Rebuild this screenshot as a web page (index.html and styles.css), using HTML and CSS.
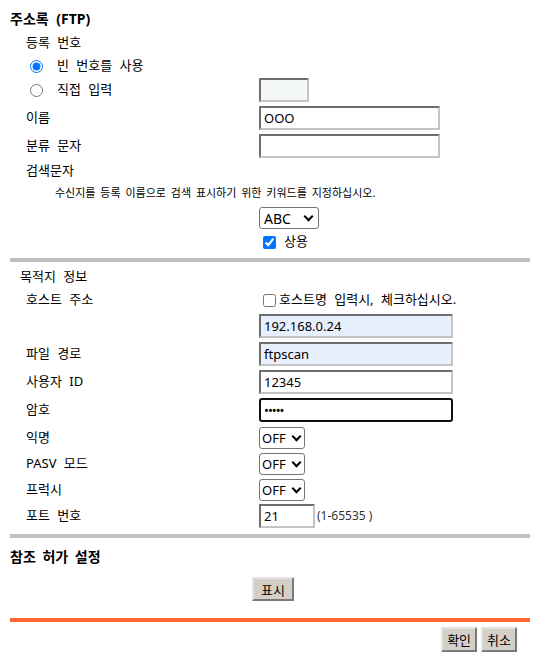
FILE: index.html
```html
<!DOCTYPE html>
<html lang="ko">
<head>
<meta charset="UTF-8" />
<title>주소록 (FTP)</title>
<link rel="stylesheet" href="styles.css">
</head>
<body>

<div class="page">
  <div class="title">주소록 (FTP)</div>
  <div class="row h26"><span class="lbl">등록 번호</span></div>
  <div class="row h20">
    <label class="opt"><input type="radio" name="regno" checked />빈 번호를 사용</label>
  </div>
  <div class="row h28">
    <label class="lbl opt"><input type="radio" name="regno" />직접 입력</label>
    <input type="text" class="field regno" />
  </div>
  <div class="row h28"><span class="lbl">이름</span><input type="text" class="field wide" value="OOO" /></div>
  <div class="row h28"><span class="lbl">분류 문자</span><input type="text" class="field wide" /></div>
  <div class="row h22"><span class="lbl">검색문자</span></div>
  <div class="hint">수신지를 등록 이름으로 검색 표시하기 위한 키워드를 지정하십시오.</div>
  <div class="row h28">
    <span class="lbl"></span>
    <span class="selbox abc"><select class="sel"><option>ABC</option><option>DEF</option></select></span>
  </div>
  <div class="row h20">
    <span class="lbl"></span>
    <label class="chk often"><input type="checkbox" checked />상용</label>
  </div>

  <div class="rule"></div>

  <div class="sub">목적지 정보</div>
  <div class="row h24">
    <span class="lbl">호스트 주소</span>
    <label class="chk"><input type="checkbox" />호스트명 입력시, 체크하십시오.</label>
  </div>
  <div class="row h28"><span class="lbl"></span><input type="text" class="field long filled" value="192.168.0.24" /></div>
  <div class="row h28"><span class="lbl">파일 경로</span><input type="text" class="field long filled" value="ftpscan" /></div>
  <div class="row h28"><span class="lbl">사용자 ID</span><input type="text" class="field long" value="12345" /></div>
  <div class="row h28"><span class="lbl">암호</span><input type="password" class="field long focus" value="12345" /></div>
  <div class="row h27">
    <span class="lbl">익명</span>
    <span class="selbox onoff"><select class="sel"><option>OFF</option><option>ON</option></select></span>
  </div>
  <div class="row h26">
    <span class="lbl">PASV 모드</span>
    <span class="selbox onoff"><select class="sel"><option>OFF</option><option>ON</option></select></span>
  </div>
  <div class="row h26">
    <span class="lbl">프럭시</span>
    <span class="selbox onoff"><select class="sel"><option>OFF</option><option>ON</option></select></span>
  </div>
  <div class="row h26">
    <span class="lbl">포트 번호</span>
    <input type="text" class="field port" value="21" /><span class="range">(1-65535 )</span>
  </div>

  <div class="rule gap5"></div>

  <div class="title ref">참조 허가 설정</div>
  <div class="center"><button type="button" class="btn show">표시</button></div>

  <div class="rule orange"></div>

  <div class="actions">
    <button type="button" class="btn">확인</button>
    <button type="button" class="btn">취소</button>
  </div>
</div>

</body>
</html>
```

FILE: styles.css
```css
body {
  margin: 0;
  font-family: "Noto Sans", "Noto Sans CJK KR", sans-serif;
  font-size: 13px;
  line-height: 1.2;
  word-spacing: 4px;
  color: #000;
  background: #fff;
}
.page {
  width: 520px;
  margin: 0 10px;
}
.title {
  height: 22px;
  margin-top: 8px;
  display: flex;
  align-items: center;
  font-size: 14px;
  font-weight: 700;
}
.title.ref {
  margin-top: 8px;
  word-spacing: 3px;
}
.row {
  display: flex;
  align-items: center;
  padding-left: 16px;
}
.h20 { height: 20px; }
.h22 { height: 22px; }
.h24 { height: 24px; }
.h26 { height: 26px; }
.h27 { height: 27px; }
.h28 { height: 28px; }
.lbl {
  width: 233px;
  flex: none;
}
.opt {
  display: flex;
  align-items: center;
}
.opt input {
  width: 13px;
  height: 13px;
  margin: 0 14px 0 4px;
}
.hint {
  height: 22px;
  display: flex;
  align-items: center;
  padding-left: 45px;
  font-size: 11px;
  word-spacing: 2px;
}
.field {
  box-sizing: border-box;
  height: 24px;
  padding: 1px 3px;
  border: 2px solid;
  border-color: #6e6e6e #c4c4c4 #c4c4c4 #6e6e6e;
  font-family: inherit;
  font-size: 13px;
  color: #000;
  background: #fff;
  outline: none;
}
.regno { width: 50px; background: #f4f8f4; }
.wide { width: 181px; }
.long { width: 194px; }
.port { width: 56px; }
.filled { background: #e8f0fe; }
.focus {
  border-color: #101010;
  border-radius: 3px;
  letter-spacing: -1px;
}
.range {
  margin-left: 2px;
  font-size: 12px;
  word-spacing: 0;
  color: #333;
}
.selbox {
  position: relative;
  display: inline-block;
  height: 22px;
}
.selbox::after {
  content: "";
  position: absolute;
  top: 6px;
  right: 7px;
  width: 5px;
  height: 5px;
  border-right: 2px solid #000;
  border-bottom: 2px solid #000;
  transform: rotate(45deg);
  pointer-events: none;
}
.sel {
  -webkit-appearance: none;
  appearance: none;
  box-sizing: border-box;
  width: 100%;
  height: 22px;
  padding: 0 0 0 3px;
  border: 1px solid #767676;
  border-radius: 3px;
  background: #fff;
  font-family: inherit;
  font-size: 13px;
  color: #000;
}
.abc { width: 60px; }
.abc .sel { font-size: 14px; padding-left: 4px; }
.onoff { width: 46px; }
.onoff .sel { padding-left: 2px; }
.onoff::after { right: 5px; }
.chk {
  display: flex;
  align-items: center;
}
.chk input {
  width: 13px;
  height: 13px;
  margin: 0 3px 0 4px;
}
.chk.often input {
  margin-right: 8px;
}
.rule {
  height: 4px;
  margin-top: 6px;
  background: #c0c0c0;
}
.rule.gap5 {
  margin-top: 5px;
}
.rule.orange {
  margin-top: 17px;
  background: #ff6633;
}
.sub {
  height: 22px;
  margin-top: 4px;
  padding-left: 10px;
  display: flex;
  align-items: center;
}
.center {
  padding-top: 9px;
  text-align: center;
}
.btn {
  box-sizing: border-box;
  height: 25px;
  padding: 0 4px;
  border: 2px solid;
  border-color: #e4e2de #7a7a7a #7a7a7a #e4e2de;
  background: #d4d0c8;
  font-family: inherit;
  font-size: 13px;
  color: #000;
}
.btn.show {
  width: 42px;
  height: 24px;
  margin-left: 6px;
}
.actions {
  display: flex;
  justify-content: flex-end;
  gap: 4px;
  padding: 5px 13px 0 0;
}
```
